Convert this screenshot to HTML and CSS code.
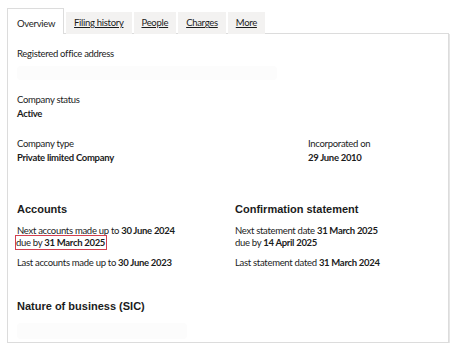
FILE: index.html
```html
<!DOCTYPE html>
<html lang="en">
<head>
  <meta charset="UTF-8">
  <meta name="viewport" content="width=device-width, initial-scale=1.0">
  <title>Company overview</title>
  <link rel="stylesheet" href="styles.css">
</head>
<body>
  <nav class="tabs">
    <span class="tab active">Overview</span>
    <a class="tab" href="#">Filing history</a>
    <a class="tab" href="#">People</a>
    <a class="tab" href="#">Charges</a>
    <a class="tab" href="#">More</a>
  </nav>

  <div class="panel">
    <p class="label">Registered office address</p>
    <div class="blur blur-address"></div>

    <p class="label">Company status</p>
    <p class="value">Active</p>

    <div class="row-thirds">
      <div>
        <p class="label">Company type</p>
        <p class="value">Private limited Company</p>
      </div>
      <div>
        <p class="label">Incorporated on</p>
        <p class="value">29 June 2010</p>
      </div>
    </div>

    <div class="row-halves">
      <div>
        <h2>Accounts</h2>
        <p class="line">Next accounts made up to <strong>30 June 2024</strong><br>
          <span class="highlight">due by <strong>31 March 2025</strong></span></p>
        <p class="line">Last accounts made up to <strong>30 June 2023</strong></p>
      </div>
      <div>
        <h2>Confirmation statement</h2>
        <p class="line">Next statement date <strong>31 March 2025</strong><br>
          due by <strong>14 April 2025</strong></p>
        <p class="line">Last statement dated <strong>31 March 2024</strong></p>
      </div>
    </div>

    <h2 class="sic">Nature of business (SIC)</h2>
    <div class="blur blur-sic"></div>
  </div>
</body>
</html>
```

FILE: styles.css
```css
body {
  font-family: Lato, Arial, sans-serif;
  margin: 0;
  padding: 9px 5px 0 7px;
  background-color: #FFFFFF;
  color: #1b1c1c;
  font-size: 9.5px;
  letter-spacing: -0.3px;
}
p {
  margin: 0;
}
.tabs {
  display: flex;
  gap: 2px;
  align-items: flex-end;
  height: 25px;
}
.tab {
  display: block;
  height: 22px;
  line-height: 21px;
  padding: 0 8px;
  background-color: #f3f2f1;
  color: #1b1c1c;
  text-decoration: underline;
  box-sizing: border-box;
}
.tab.active {
  height: 26px;
  line-height: 29px;
  padding: 0 8px 0 9px;
  background-color: #fff;
  border: 1px solid #dcdcdc;
  border-bottom: none;
  text-decoration: none;
  position: relative;
  z-index: 1;
}
.panel {
  border: 1px solid #dcdcdc;
  box-shadow: 1px 1px 0 #e6e6e6;
  margin-top: -1px;
  padding: 14px 10px 10px 9px;
  height: 310px;
  box-sizing: border-box;
}
.label {
  line-height: 12px;
}
.value {
  font-weight: bold;
  line-height: 12px;
  margin-top: 2px;
}
.blur {
  background-color: #fcfcfc;
  border-radius: 4px;
}
.blur-address {
  width: 260px;
  height: 14px;
  margin: 6px 0 14px;
}
.row-thirds {
  display: grid;
  grid-template-columns: 276px 1fr;
  column-gap: 15px;
  margin-top: 18px;
}
.row-halves {
  display: grid;
  grid-template-columns: 1fr 1fr;
  column-gap: 15px;
  margin-top: 38px;
}
h2 {
  font-family: "Liberation Sans", Arial, sans-serif;
  font-size: 11px;
  font-weight: bold;
  letter-spacing: 0;
  margin: 0 0 9px;
  line-height: 14px;
}
.line {
  line-height: 12px;
  margin-bottom: 8px;
}
.highlight {
  border: 1px solid #d2404f;
  padding: 1px 1px 1px 0;
  margin-left: -2px;
}
h2.sic {
  margin-top: 22px;
}
.blur-sic {
  width: 170px;
  height: 16px;
  margin-top: 10px;
}
```
